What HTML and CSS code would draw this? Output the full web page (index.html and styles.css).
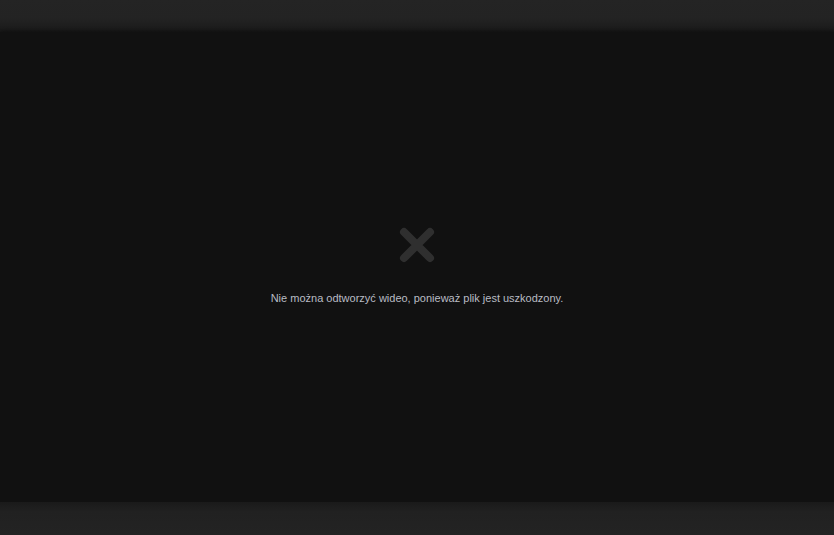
FILE: index.html
```html
<!DOCTYPE html>
<html lang="pl">
<head>
<meta charset="utf-8">
<title>Wideo</title>
<link rel="stylesheet" href="styles.css">
</head>
<body>
<div class="page">
  <div class="band band-top"></div>
  <main class="player">
    <div class="error">
      <svg class="icon" width="36" height="36" viewBox="0 0 36 36" aria-hidden="true">
        <path d="M5 5 L31 31 M31 5 L5 31" stroke="#2f2f2f" stroke-width="8" stroke-linecap="round" fill="none"/>
      </svg>
      <p class="msg">Nie można odtworzyć wideo, ponieważ plik jest uszkodzony.</p>
    </div>
  </main>
  <div class="band band-bottom"></div>
</div>
</body>
</html>
```
FILE: styles.css
```css
html, body {
  margin: 0;
  padding: 0;
  background: #222222;
}
.page {
  width: 834px;
  height: 535px;
  display: flex;
  flex-direction: column;
  background: #232323;
  overflow: hidden;
}
.band {
  flex: 0 0 auto;
}
.band-top {
  height: 32px;
  background: linear-gradient(to bottom, #242424 0%, #232323 55%, #1d1d1d 85%, #171717 100%);
}
.band-bottom {
  height: 33px;
  background: linear-gradient(to bottom, #1a1a1a 0%, #212121 30%, #232323 100%);
}
.player {
  flex: 1 1 auto;
  background: #111111;
  display: flex;
  justify-content: center;
  box-shadow: 0 0 5px rgba(0,0,0,0.45);
}
.error {
  display: flex;
  flex-direction: column;
  align-items: center;
  padding-top: 195px;
}
.icon {
  display: block;
}
.msg {
  margin: 29px 0 0 0;
  font-family: "Liberation Sans", Arial, sans-serif;
  font-size: 11px;
  line-height: 13px;
  color: #b9bcc4;
}
```
